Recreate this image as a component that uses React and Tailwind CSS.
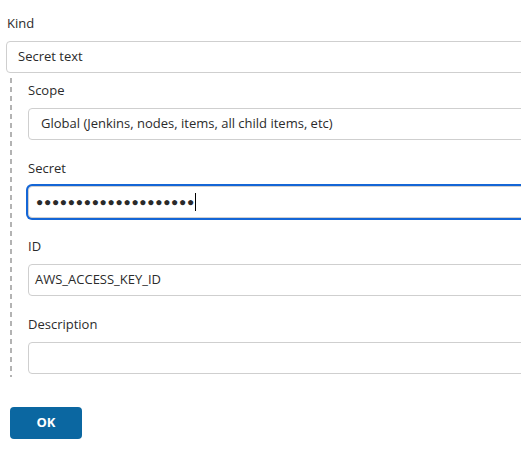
import React from 'react';

const Label = ({ children }) => (
  <div className="text-[13px] leading-5 mb-2 text-[#2b2b2b]">{children}</div>
);

const Field = ({ children, className = '' }) => (
  <div
    className={`h-8 w-[560px] rounded-[4px] border border-[#cfcfcf] bg-white px-3 flex items-center text-[13px] text-[#2b2b2b] ${className}`}
  >
    {children}
  </div>
);

const App = () => {
  return (
    <div className="w-[521px] h-[460px] overflow-hidden bg-white font-['Open_Sans',sans-serif]">
      <div className="pt-[13px] pl-[6px]">
        {/* Kind */}
        <div className="pl-[1px]">
          <Label>Kind</Label>
        </div>
        <Field className="px-[11px]">Secret text</Field>

        {/* Nested fields */}
        <div className="flex mt-[4px] ml-[4px]">
          <div className="w-[2px] shrink-0 mt-[1px] bg-[repeating-linear-gradient(to_bottom,#b3b3b3_0px,#b3b3b3_5px,transparent_5px,transparent_9px)]" />
          <div className="pl-[16px] pt-[3px] pb-[3px]">
            <Label>Scope</Label>
            <Field>Global (Jenkins, nodes, items, all child items, etc)</Field>

            <div className="mt-[18px]">
              <Label>Secret</Label>
              <Field className="border-[#1466d6] ring-2 ring-[#1466d6] px-[7px]">
                <span className="text-[12px] tracking-[0.7px] text-[#2a2a2a] leading-none">●●●●●●●●●●●●●●●●●●●●</span>
                <span className="inline-block w-[1px] h-[18px] bg-black" />
              </Field>
            </div>

            <div className="mt-[18px]">
              <Label>ID</Label>
              <Field className="px-[6px]">AWS_ACCESS_KEY_ID</Field>
            </div>

            <div className="mt-[18px]">
              <Label>Description</Label>
              <Field />
            </div>
          </div>
        </div>

        {/* OK button */}
        <button className="mt-[30px] ml-[4px] w-[72px] h-8 rounded-[4px] bg-[#0b67a1] text-white text-[13px] font-bold">
          OK
        </button>
      </div>
    </div>
  );
};

export default App;
